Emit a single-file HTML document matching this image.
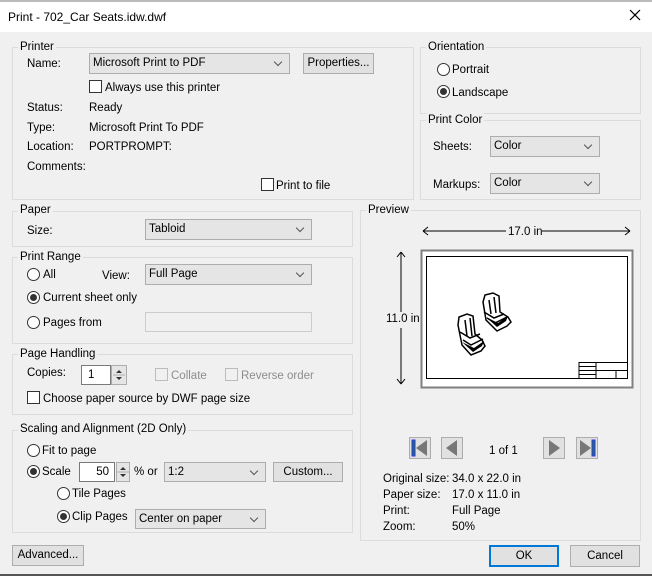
<!DOCTYPE html>
<html><head><meta charset="utf-8"><style>
*{box-sizing:border-box;margin:0;padding:0}
body{width:652px;height:576px;position:relative;background:#f0f0f0;font-family:"Liberation Sans",sans-serif;font-size:11.5px;color:#000;overflow:hidden}
div,span{position:absolute}
.t{white-space:nowrap;line-height:14px}
.g{border:1px solid #dcdcdc}
.gl{background:#f0f0f0;padding:0 2px;line-height:14px;white-space:nowrap}
.cb{background:#e5e5e5;border:1px solid #adadad;padding-left:3px;line-height:19px;white-space:nowrap}
.cb:after{content:"";position:absolute;right:8px;top:5px;width:5px;height:5px;border-right:1px solid #555;border-bottom:1px solid #555;transform:rotate(45deg)}
.btn{background:#e1e1e1;border:1px solid #adadad;text-align:center;line-height:18px;white-space:nowrap}
.chk{width:13px;height:13px;border:1px solid #333;background:#fff}
.chk.d{border-color:#bcbcbc;background:#f0f0f0}
.rd{width:13px;height:13px;border:1px solid #333;border-radius:50%;background:#fff}
.rd.on:after{content:"";position:absolute;left:2px;top:2px;width:7px;height:7px;border-radius:50%;background:#333}
.nb{width:22px;height:22px;background:#e1e1e1;border:1px solid #adadad}
</style></head><body>
<div style="left:0;top:0;width:652px;height:32px;background:#fff"></div>
<div style="left:0;top:0;width:652px;height:2px;background:#bbb"></div>
<div class="t" style="left:8px;top:10px;font-size:12px">Print - 702_Car Seats.idw.dwf</div>
<svg style="position:absolute;left:629px;top:9px" width="12" height="12"><path d="M1 1L11 11M11 1L1 11" stroke="#000" stroke-width="1.2"/></svg>

<!-- Printer -->
<div class="g" style="left:12px;top:47px;width:402px;height:153px"></div>
<div class="gl" style="left:18px;top:40px">Printer</div>
<div class="t" style="left:27px;top:57px">Name:</div>
<div class="cb" style="left:89px;top:53px;width:201px;height:21px">Microsoft Print to PDF</div>
<div class="btn" style="left:303px;top:53px;width:71px;height:21px">Properties...</div>
<div class="chk" style="left:89px;top:80px"></div>
<div class="t" style="left:105px;top:81px">Always use this printer</div>
<div class="t" style="left:27px;top:101px">Status:</div><div class="t" style="left:89px;top:101px">Ready</div>
<div class="t" style="left:27px;top:121px">Type:</div><div class="t" style="left:89px;top:121px">Microsoft Print To PDF</div>
<div class="t" style="left:27px;top:140px">Location:</div><div class="t" style="left:89px;top:140px">PORTPROMPT:</div>
<div class="t" style="left:27px;top:160px">Comments:</div>
<div class="chk" style="left:261px;top:178px"></div>
<div class="t" style="left:276px;top:179px">Print to file</div>

<!-- Orientation -->
<div class="g" style="left:420px;top:47px;width:221px;height:67px"></div>
<div class="gl" style="left:426px;top:40px">Orientation</div>
<div class="rd" style="left:437px;top:63px"></div><div class="t" style="left:452px;top:63px">Portrait</div>
<div class="rd on" style="left:437px;top:85px"></div><div class="t" style="left:452px;top:86px">Landscape</div>

<!-- Print Color -->
<div class="g" style="left:420px;top:120px;width:221px;height:80px"></div>
<div class="gl" style="left:426px;top:113px">Print Color</div>
<div class="t" style="left:433px;top:140px">Sheets:</div>
<div class="cb" style="left:490px;top:136px;width:110px;height:21px">Color</div>
<div class="t" style="left:433px;top:178px">Markups:</div>
<div class="cb" style="left:490px;top:173px;width:110px;height:21px">Color</div>

<!-- Paper -->
<div class="g" style="left:12px;top:211px;width:341px;height:36px"></div>
<div class="gl" style="left:18px;top:203px">Paper</div>
<div class="t" style="left:27px;top:224px">Size:</div>
<div class="cb" style="left:145px;top:219px;width:167px;height:21px">Tabloid</div>

<!-- Print Range -->
<div class="g" style="left:12px;top:257px;width:341px;height:87px"></div>
<div class="gl" style="left:18px;top:250px">Print Range</div>
<div class="rd" style="left:27px;top:268px"></div><div class="t" style="left:43px;top:268px">All</div>
<div class="t" style="left:102px;top:269px">View:</div>
<div class="cb" style="left:145px;top:264px;width:167px;height:21px">Full Page</div>
<div class="rd on" style="left:27px;top:291px"></div><div class="t" style="left:43px;top:291px">Current sheet only</div>
<div class="rd" style="left:27px;top:316px"></div><div class="t" style="left:43px;top:316px">Pages from</div>
<div style="left:145px;top:312px;width:167px;height:20px;border:1px solid #ccc;background:#f0f0f0"></div>

<!-- Page Handling -->
<div class="g" style="left:12px;top:354px;width:341px;height:61px"></div>
<div class="gl" style="left:18px;top:347px">Page Handling</div>
<div class="t" style="left:27px;top:366px">Copies:</div>
<div style="left:81px;top:365px;width:30px;height:20px;border:1px solid #7a7a7a;background:#fff;padding-left:6px;line-height:18px">1</div>
<div style="left:111px;top:365px;width:16px;height:20px;border:1px solid #adadad;background:#e5e5e5"></div>
<svg style="position:absolute;left:113px;top:367px" width="12" height="16"><path d="M3 6L6 3L9 6Z M3 10L6 13L9 10Z" fill="#333"/><line x1="0" y1="8" x2="12" y2="8" stroke="#adadad"/></svg>
<div class="chk d" style="left:155px;top:368px"></div><div class="t" style="left:171px;top:369px;color:#8d8d8d">Collate</div>
<div class="chk d" style="left:225px;top:368px"></div><div class="t" style="left:241px;top:369px;color:#8d8d8d">Reverse order</div>
<div class="chk" style="left:27px;top:391px"></div><div class="t" style="left:43px;top:392px">Choose paper source by DWF page size</div>

<!-- Scaling -->
<div class="g" style="left:12px;top:430px;width:341px;height:103px"></div>
<div class="gl" style="left:18px;top:422px">Scaling and Alignment (2D Only)</div>
<div class="rd" style="left:27px;top:444px"></div><div class="t" style="left:42px;top:444px">Fit to page</div>
<div class="rd on" style="left:27px;top:465px"></div><div class="t" style="left:42px;top:465px">Scale</div>
<div style="left:79px;top:462px;width:36px;height:20px;border:1px solid #7a7a7a;background:#fff;text-align:right;padding-right:5px;line-height:18px">50</div>
<div style="left:116px;top:462px;width:14px;height:20px;border:1px solid #adadad;background:#e5e5e5"></div>
<svg style="position:absolute;left:117px;top:464px" width="12" height="16"><path d="M3 6L6 3L9 6Z M3 10L6 13L9 10Z" fill="#333"/><line x1="0" y1="8" x2="12" y2="8" stroke="#adadad"/></svg>
<div class="t" style="left:134px;top:465px">% or</div>
<div class="cb" style="left:164px;top:462px;width:102px;height:20px">1:2</div>
<div class="btn" style="left:273px;top:462px;width:70px;height:20px">Custom...</div>
<div class="rd" style="left:57px;top:487px"></div><div class="t" style="left:72px;top:487px">Tile Pages</div>
<div class="rd on" style="left:57px;top:510px"></div><div class="t" style="left:72px;top:510px">Clip Pages</div>
<div class="cb" style="left:135px;top:509px;width:131px;height:20px">Center on paper</div>

<div class="btn" style="left:12px;top:545px;width:72px;height:21px">Advanced...</div>

<!-- Preview -->
<div class="g" style="left:360px;top:210px;width:281px;height:331px"></div>
<div class="gl" style="left:366px;top:203px">Preview</div>
<svg style="position:absolute;left:380px;top:220px" width="260" height="170">
<path d="M43 11H126M162 11H250M43 11l5-4M43 11l5 4M250 11l-5-4M250 11l-5 4" stroke="#000" fill="none"/>
<text x="128" y="15" font-family="Liberation Sans" font-size="11.5">17.0 in</text>
<path d="M21 32V92M21 108V164M21 32l-4 5M21 32l4 5M21 164l-4-5M21 164l4-5" stroke="#000" fill="none"/>
<text x="6" y="102" font-family="Liberation Sans" font-size="11.5">11.0 in</text>
<rect x="41.5" y="30.5" width="211" height="137" fill="#fff" stroke="#808080" stroke-width="2"/>
<rect x="46.5" y="36.5" width="201" height="122" fill="none" stroke="#000"/>
<path d="M199 142.5H247M199 146.5H216M199 150.5H247M199 154.5H216M199 142V158M216 142V158M236 150V158" stroke="#000" fill="none"/>
<g stroke="#000" fill="none" stroke-width="1.5">
<path d="M82 125l-4-20l1-8l8-3l6 2l2 18l7 6l3 6l-4 5l-10 4z"/>
<path d="M85 100l2 16M90 98l2 18M80 112l10 6l10-4M83 120l8 5l12-6"/>
<path d="M106 100l-3-18l2-7l8-2l6 3l1 16l8 5l3 5l-4 4l-10 5z"/>
<path d="M109 80l2 14M114 77l2 16M104 92l10 6l10-4M107 98l8 5l12-6"/>
</g>
<path d="M82 122l12 6l10-7l-2 5l-9 6z M106 97l12 6l10-7l-2 5l-9 6z" fill="#000"/>
</svg>

<!-- nav -->
<div class="nb" style="left:409px;top:437px"></div>
<svg style="position:absolute;left:409px;top:437px" width="22" height="22"><rect x="3" y="3" width="3" height="16" fill="#1a7070" stroke="#33d"/><path d="M7 11L18 3V19Z" fill="#777"/></svg>
<div class="nb" style="left:441px;top:437px"></div>
<svg style="position:absolute;left:441px;top:437px" width="22" height="22"><path d="M5 11L16 3V19Z" fill="#777"/></svg>
<div class="t" style="left:489px;top:444px">1 of 1</div>
<div class="nb" style="left:543px;top:437px"></div>
<svg style="position:absolute;left:543px;top:437px" width="22" height="22"><path d="M17 11L6 3V19Z" fill="#777"/></svg>
<div class="nb" style="left:576px;top:437px"></div>
<svg style="position:absolute;left:576px;top:437px" width="22" height="22"><path d="M15 11L4 3V19Z" fill="#777"/><rect x="16" y="3" width="3" height="16" fill="#1a7070" stroke="#33d"/></svg>

<div class="t" style="left:383px;top:472px">Original size:</div><div class="t" style="left:452px;top:472px">34.0 x 22.0 in</div>
<div class="t" style="left:383px;top:488px">Paper size:</div><div class="t" style="left:452px;top:488px">17.0 x 11.0 in</div>
<div class="t" style="left:383px;top:504px">Print:</div><div class="t" style="left:452px;top:504px">Full Page</div>
<div class="t" style="left:383px;top:520px">Zoom:</div><div class="t" style="left:452px;top:520px">50%</div>

<div class="btn" style="left:489px;top:545px;width:70px;height:22px;border:2px solid #0078d7;line-height:18px">OK</div>
<div class="btn" style="left:570px;top:545px;width:70px;height:22px;line-height:20px">Cancel</div>
<div style="left:0;top:574px;width:652px;height:2px;background:#555"></div>
</body></html>
